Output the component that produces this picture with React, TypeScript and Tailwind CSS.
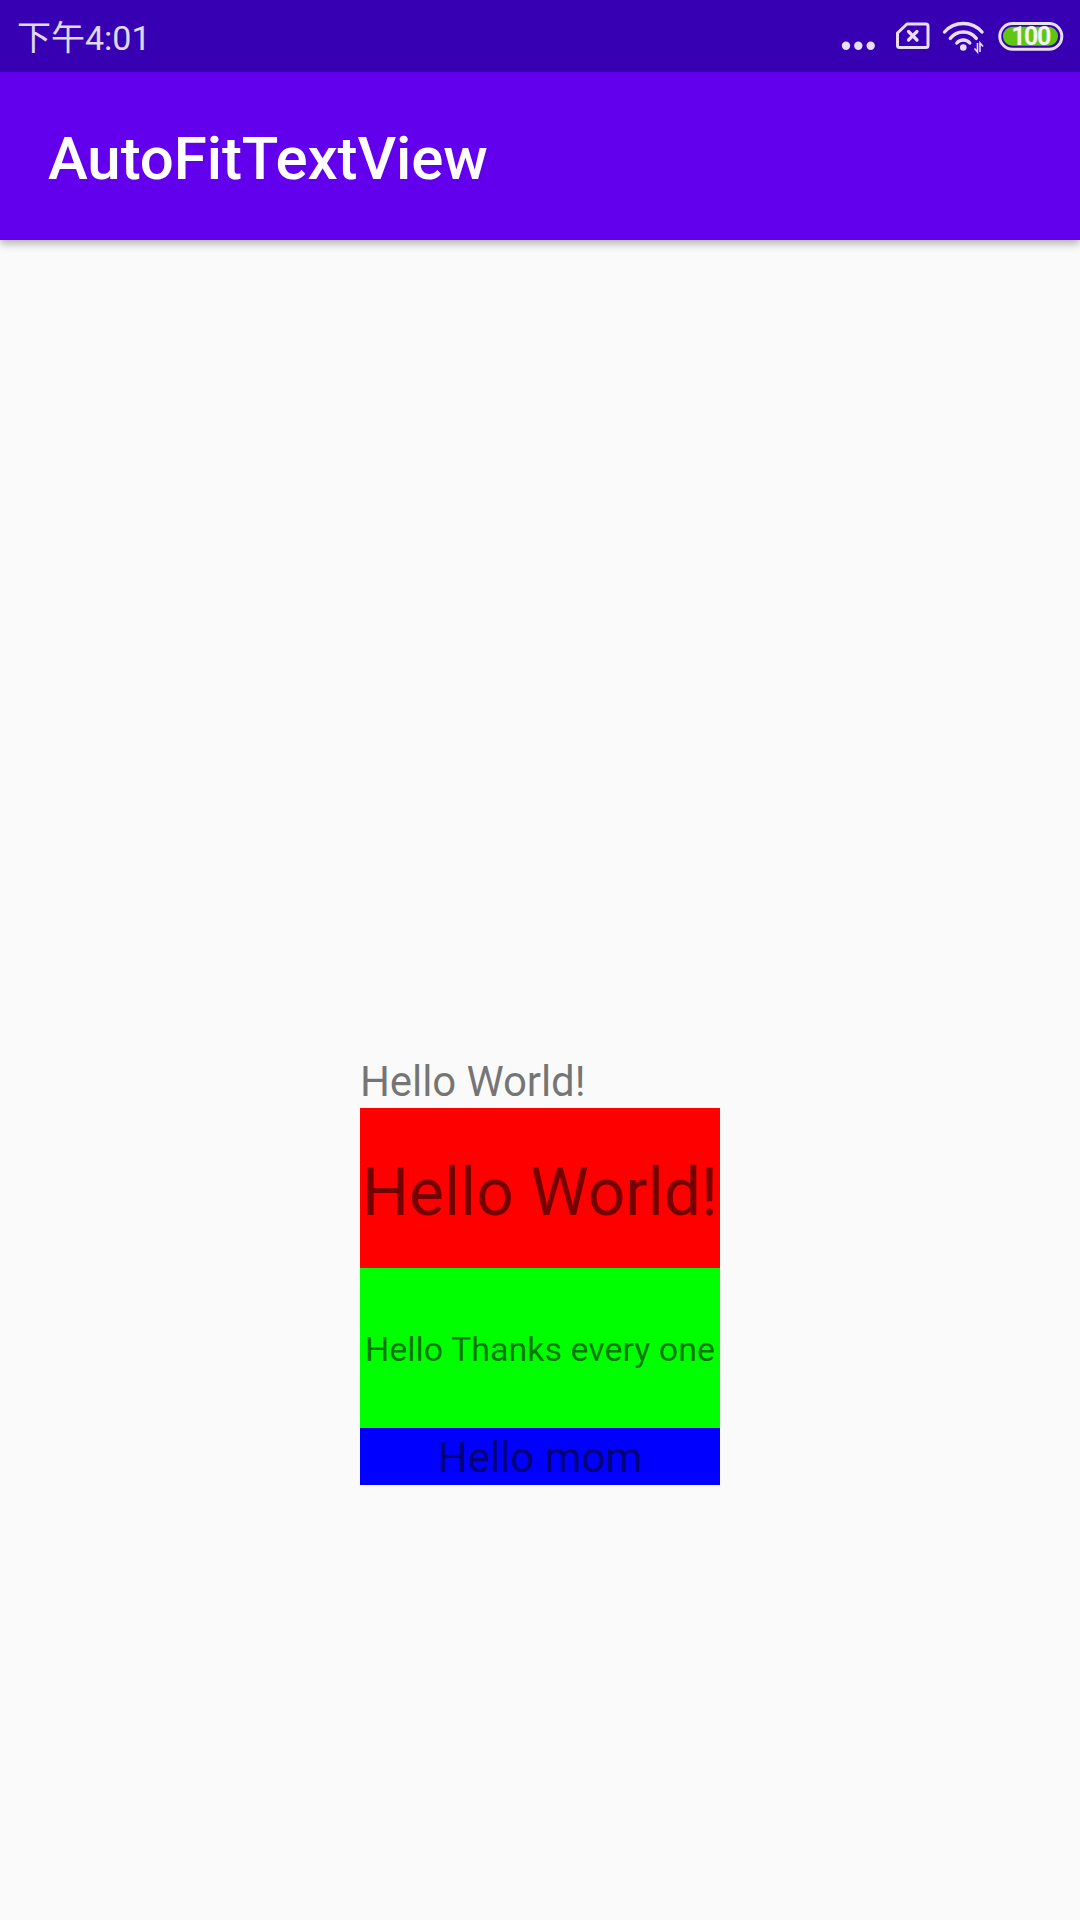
export default function App() {
  return (
    <div className="flex h-[1920px] w-[1080px] flex-col overflow-hidden bg-[#fafafa] font-['Roboto','Noto_Sans_CJK_SC',sans-serif]">
      <div className="flex h-[72px] items-center justify-between bg-[#3700b3] pl-[17px] pr-[12px]">
        <span className="pt-[4px] text-[34px] leading-[68px] font-normal text-white/85">下午4:01</span>
        <svg width="230" height="72" viewBox="0 0 230 72" className="text-[#e6dff6]">
          <g fill="currentColor">
            <circle cx="8" cy="45.700" r="4.200" />
            <circle cx="20.300" cy="45.700" r="4.200" />
            <circle cx="32.700" cy="45.700" r="4.200" />
          </g>
          <path d="M69 24H88a2 2 0 0 1 2 2v19.500a2 2 0 0 1-2 2H61.500a2 2 0 0 1-2-2V33z" fill="none" stroke="currentColor" strokeWidth="3" strokeLinejoin="round" />
          <path d="M70.500 31.500l8.500 8.500M79 31.500L70.500 40" fill="none" stroke="currentColor" strokeWidth="3.200" strokeLinecap="round" />
          <g fill="none" stroke="currentColor" strokeWidth="3.400" strokeLinecap="round">
            <path d="M106.500 32A25 25 0 0 1 144 32" />
            <path d="M112.300 38.400A16.500 16.500 0 0 1 138.300 38.400" />
            <path d="M118.800 43A8.500 8.500 0 0 1 131.800 43" />
          </g>
          <circle cx="125.300" cy="47.500" r="3.300" fill="currentColor" />
          <path d="M139.500 43v9l-3-3.500M142 52v-9l3 3.500" fill="none" stroke="currentColor" strokeWidth="1.600" />
          <rect x="161.800" y="23.500" width="62" height="25.700" rx="12.800" fill="none" stroke="currentColor" strokeWidth="3" />
          <rect x="165" y="26.700" width="55" height="19" rx="9.500" fill="#5fc712" />
          <text x="192.500" y="45" textAnchor="middle" fontFamily="Roboto" fontWeight="700" fontSize="25" letterSpacing="-1.500" fill="#f4f4f4">100</text>
        </svg>
      </div>
      <div className="flex h-[168px] items-center bg-[#6200ee] pl-[48px] pt-[5px] shadow-[0_4px_8px_rgba(0,0,0,0.28)]">
        <span className="text-[60px] leading-none font-medium tracking-[-0.1px] text-white">AutoFitTextView</span>
      </div>
      <div className="flex flex-col pl-[360px] pt-[819px]">
        <div className="h-[49px] text-[42px] leading-[46px] tracking-[-0.1px] text-black/54">Hello World!</div>
        <div className="flex h-[160px] w-[360px] items-center justify-center bg-[#ff0000] pt-[10px] text-[66px] leading-none whitespace-nowrap text-black/54">Hello World!</div>
        <div className="flex h-[160px] w-[360px] items-center justify-center bg-[#00ff00] pt-[2px] text-[34px] leading-none whitespace-nowrap text-black/54">Hello Thanks every one</div>
        <div className="flex h-[57px] w-[360px] items-center justify-center bg-[#0000ff] pt-[3px] text-[42px] leading-none whitespace-nowrap text-black/54">Hello mom</div>
      </div>
    </div>
  );
}
